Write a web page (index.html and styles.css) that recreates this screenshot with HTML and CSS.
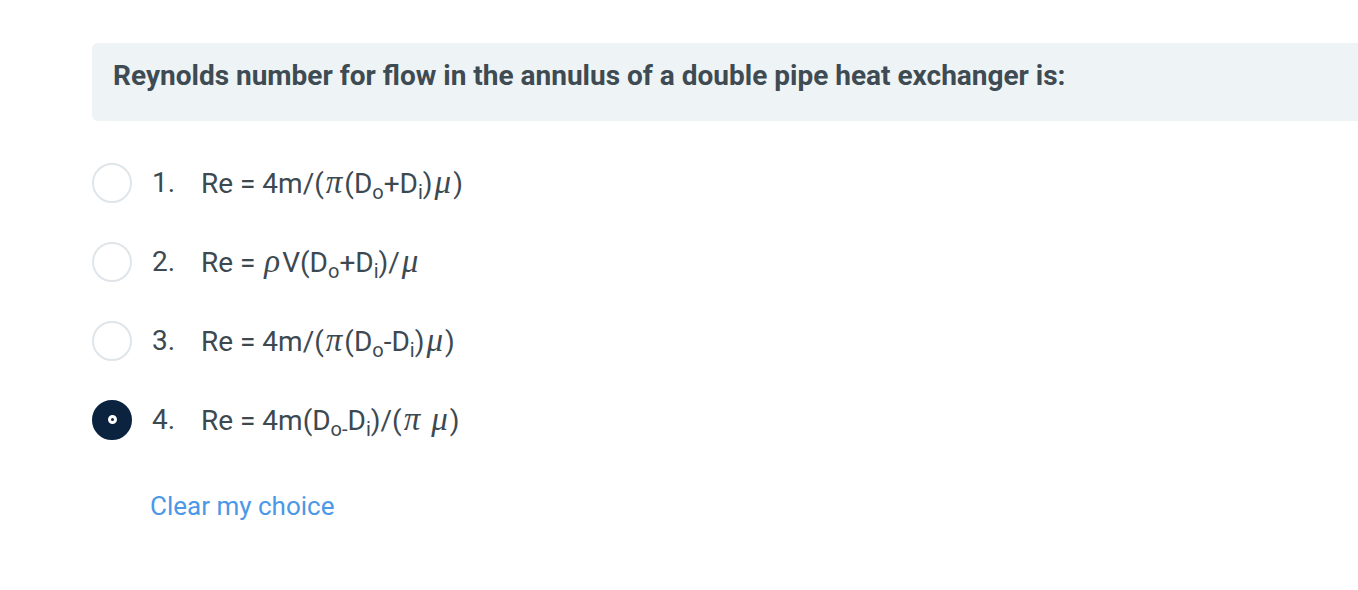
FILE: index.html
```html
<!DOCTYPE html>
<html>
<head>
<meta charset="utf-8">
<link rel="stylesheet" href="styles.css">
</head>
<body>
<div class="page">
  <div class="question">Reynolds number for flow in the annulus of a double pipe heat exchanger is:</div>
  <div class="options">
    <div class="option">
      <span class="radio"></span>
      <span class="num">1.</span>
      <span class="ans">Re = 4m/(<i class="m">π</i>(D<sub>o</sub>+D<sub>i</sub>)<i class="m">μ</i>)</span>
    </div>
    <div class="option">
      <span class="radio"></span>
      <span class="num">2.</span>
      <span class="ans">Re = <i class="m">ρ</i>V(D<sub>o</sub>+D<sub>i</sub>)/<i class="m">μ</i></span>
    </div>
    <div class="option">
      <span class="radio"></span>
      <span class="num">3.</span>
      <span class="ans">Re = 4m/(<i class="m">π</i>(D<sub>o</sub>-D<sub>i</sub>)<i class="m">μ</i>)</span>
    </div>
    <div class="option">
      <span class="radio checked"></span>
      <span class="num">4.</span>
      <span class="ans">Re = 4m(D<sub>o-</sub>D<sub>i</sub>)/(<i class="m">π</i> <i class="m">μ</i>)</span>
    </div>
  </div>
  <a class="clear" href="#">Clear my choice</a>
</div>
</body>
</html>
```

FILE: styles.css
```css
html, body {
  margin: 0;
  padding: 0;
  background: #ffffff;
}
body {
  font-family: Roboto, "Liberation Sans", sans-serif;
  color: #3d4951;
}
.page {
  padding-top: 43px;
  padding-left: 92px;
}
.question {
  background: #eef3f6;
  border-radius: 6px 0 0 6px;
  height: 78px;
  box-sizing: border-box;
  padding: 0 21px 12px;
  display: flex;
  align-items: center;
  font-size: 28px;
  font-weight: 700;
  color: #3e4b53;
  line-height: 34px;
}
.options {
  display: flex;
  flex-direction: column;
  padding-top: 22px;
}
.option {
  display: flex;
  align-items: center;
  height: 79px;
  font-size: 28px;
}
.radio {
  width: 40px;
  height: 40px;
  box-sizing: border-box;
  border: 2px solid #dfe5e9;
  border-radius: 50%;
  background: #fff;
  margin-right: 20px;
  display: flex;
  align-items: center;
  justify-content: center;
  flex-shrink: 0;
}
.radio.checked {
  background: #0c2340;
  border-color: #0c2340;
}
.radio.checked::after {
  content: "";
  width: 3px;
  height: 3px;
  border: 3px solid #fff;
  border-radius: 50%;
  background: #0c2340;
}
.num {
  width: 49px;
  flex-shrink: 0;
}
.ans sub {
  font-size: 20px;
  vertical-align: -6px;
  line-height: 0;
}
.m {
  font-family: "Liberation Serif", "DejaVu Serif", serif;
  font-style: italic;
  font-size: 33px;
  padding: 0 2px;
}
.clear {
  display: inline-block;
  margin-top: 32px;
  margin-left: 58px;
  font-size: 26px;
  color: #4a98e6;
  text-decoration: none;
}
```
